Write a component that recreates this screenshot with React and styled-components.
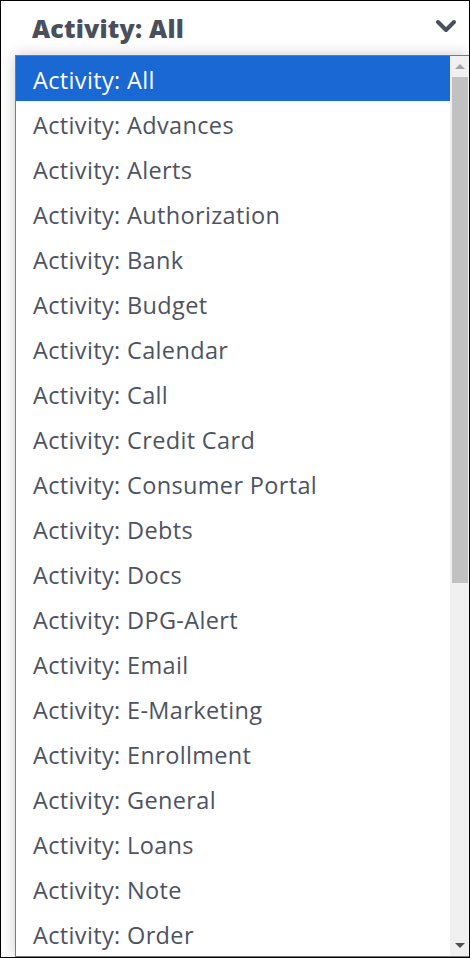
import React from "react";
import styled, { createGlobalStyle } from "styled-components";

const Global = createGlobalStyle`
  html, body { margin: 0; padding: 0; background: #fff; }
  * { box-sizing: border-box; }
`;

const Frame = styled.div`
  width: 470px;
  height: 958px;
  border: 1px solid #000;
  display: flex;
  flex-direction: column;
  overflow: hidden;
  background: #fff;
`;

const Header = styled.div`
  height: 54px;
  flex: none;
  display: flex;
  align-items: center;
  justify-content: space-between;
  padding: 0 12px 0 31px;
  font-family: "Open Sans", "Noto Sans", sans-serif;
  font-weight: 800;
  font-size: 25px;
  letter-spacing: 0.2px;
  color: #4a4f5c;
`;

const Title = styled.span`
  margin-top: -1px;
`;

const ListBox = styled.div`
  flex: 1;
  margin-left: 14px;
  border: 1px solid #7a7a7a;
  border-right: none;
  display: flex;
  min-height: 0;
  box-shadow: 0 0 14px rgba(0, 0, 0, 0.2);
  background: #fff;
`;

const Items = styled.div`
  flex: 1;
  overflow: hidden;
`;

const Item = styled.div`
  height: 45px;
  display: flex;
  align-items: center;
  padding: 2px 0 0 17px;
  font-family: "Open Sans", "Noto Sans", sans-serif;
  font-size: 23.5px;
  letter-spacing: 0.35px;
  white-space: nowrap;
  color: ${(p) => (p.$selected ? "#ffffff" : "#4d5361")};
  background: ${(p) => (p.$selected ? "#1a68d3" : "#ffffff")};
`;

const Scrollbar = styled.div`
  width: 19px;
  flex: none;
  background: #f0f0f0;
  display: flex;
  flex-direction: column;
  align-items: center;
  padding-left: 1px;
`;

const ArrowBtn = styled.div`
  height: 20px;
  flex: none;
  display: flex;
  align-items: center;
  justify-content: center;
  width: 100%;
`;

const Track = styled.div`
  flex: 1;
  width: 100%;
  display: flex;
  flex-direction: column;
  align-items: center;
`;

const Thumb = styled.div`
  width: 16px;
  height: 506px;
  background: #c1c1c1;
  margin-top: 1px;
`;

const items = [
  "All",
  "Advances",
  "Alerts",
  "Authorization",
  "Bank",
  "Budget",
  "Calendar",
  "Call",
  "Credit Card",
  "Consumer Portal",
  "Debts",
  "Docs",
  "DPG-Alert",
  "Email",
  "E-Marketing",
  "Enrollment",
  "General",
  "Loans",
  "Note",
  "Order",
];

function Chevron() {
  return (
    <svg width="22" height="16" viewBox="0 0 22 16" style={{ marginTop: -4 }}>
      <polyline
        points="3,4 11,12 19,4"
        fill="none"
        stroke="#4a4f5c"
        strokeWidth="4"
        strokeLinecap="round"
        strokeLinejoin="round"
      />
    </svg>
  );
}

export default function App() {
  return (
    <>
      <Global />
      <Frame>
        <Header>
          <Title>Activity: All</Title>
          <Chevron />
        </Header>
        <ListBox>
          <Items>
            {items.map((t, i) => (
              <Item key={t} $selected={i === 0}>
                Activity: {t}
              </Item>
            ))}
          </Items>
          <Scrollbar>
            <ArrowBtn>
              <svg width="10" height="6" viewBox="0 0 10 6">
                <polygon points="0,6 5,1 10,6" fill="#a3a3a3" />
              </svg>
            </ArrowBtn>
            <Track>
              <Thumb />
            </Track>
            <ArrowBtn>
              <svg width="10" height="6" viewBox="0 0 10 6">
                <polygon points="0,0 10,0 5,5" fill="#505050" />
              </svg>
            </ArrowBtn>
          </Scrollbar>
        </ListBox>
      </Frame>
    </>
  );
}
